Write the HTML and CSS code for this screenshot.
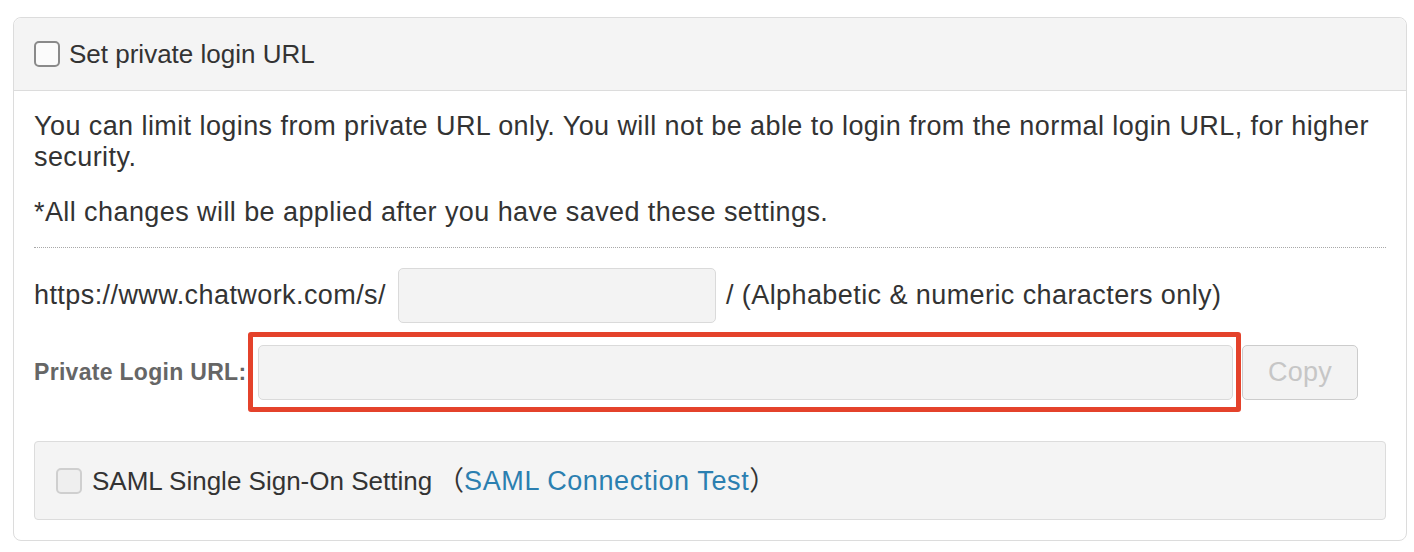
FILE: index.html
```html
<!DOCTYPE html>
<html lang="en">
<head>
<meta charset="utf-8">
<title>Private login URL</title>
<link rel="stylesheet" href="styles.css">
</head>
<body>
<section class="panel">
  <header class="panel-head">
    <label class="check-label">
      <input type="checkbox" class="check">
      <span>Set private login URL</span>
    </label>
  </header>
  <div class="panel-body">
    <p class="desc">You can limit logins from private URL only. You will not be able to login from the normal login URL, for higher security.</p>
    <p class="desc note">*All changes will be applied after you have saved these settings.</p>
    <div class="divider"></div>
    <div class="url-row">
      <span class="url-prefix">https://www.chatwork.com/s/</span>
      <input type="text" class="field slug-field">
      <span class="url-hint">/ (Alphabetic &amp; numeric characters only)</span>
    </div>
    <div class="login-row">
      <span class="login-label">Private Login URL:</span>
      <div class="login-field-wrap">
        <input type="text" class="field login-field">
        <div class="highlight"></div>
      </div>
      <button class="copy-btn" type="button">Copy</button>
    </div>
    <div class="saml-box">
      <label class="saml-label">
        <input type="checkbox" class="check check-disabled">
        <span>SAML Single Sign-On Setting</span>
      </label>
      <span class="saml-link-wrap"><span class="paren">（</span><a href="#" class="saml-link">SAML Connection Test</a><span class="paren">）</span></span>
    </div>
  </div>
</section>
</body>
</html>
```

FILE: styles.css
```css
* {
  box-sizing: border-box;
}

body {
  margin: 0;
  background: #ffffff;
  font-family: "Liberation Sans", Arial, "Noto Sans CJK JP", sans-serif;
  color: #333333;
}

.panel {
  margin: 17px 0 0 13px;
  width: 1394px;
  border: 1px solid #dcdcdc;
  border-radius: 8px;
  background: #ffffff;
}

.panel-head {
  height: 73px;
  padding: 0 20px;
  display: flex;
  align-items: center;
  background: #f4f4f4;
  border-bottom: 1px solid #dcdcdc;
  border-radius: 8px 8px 0 0;
}

.check-label {
  display: flex;
  align-items: center;
  gap: 9px;
  font-size: 26px;
  color: #333333;
}

.check {
  appearance: none;
  -webkit-appearance: none;
  margin: 0;
  width: 26px;
  height: 26px;
  border: 2px solid #8a8a8a;
  border-radius: 5px;
  background: #fbfbfb;
  flex: none;
}

.check-disabled {
  border-color: #cfcfcf;
  background: #efefef;
}

.panel-body {
  padding: 20px 20px 20px 20px;
}

.desc {
  margin: 0;
  font-size: 27px;
  line-height: 31px;
  letter-spacing: 0.42px;
  color: #333333;
}

.note {
  margin-top: 24px;
}

.divider {
  margin-top: 19px;
  border-top: 1px dotted #a8a8a8;
}

.url-row {
  margin-top: 20px;
  display: flex;
  align-items: center;
  font-size: 27px;
  letter-spacing: 0.42px;
  color: #333333;
}

.field {
  height: 55px;
  border: 1px solid #dadada;
  border-radius: 5px;
  background: #f3f3f3;
  font: inherit;
  padding: 0 10px;
  outline: none;
}

.slug-field {
  width: 318px;
  margin: 0 10px 0 12px;
}

.login-row {
  margin-top: 22px;
  display: flex;
  align-items: center;
}

.login-label {
  font-size: 23px;
  font-weight: bold;
  letter-spacing: 0.3px;
  color: #666666;
  width: 224px;
  flex: none;
  white-space: nowrap;
}

.login-field-wrap {
  position: relative;
  width: 975px;
  flex: none;
}

.login-field {
  display: block;
  width: 100%;
}

.highlight {
  position: absolute;
  top: -13px;
  left: -10px;
  right: -8px;
  bottom: -12px;
  border: 5px solid #e4422b;
  border-radius: 3px;
  pointer-events: none;
}

.copy-btn {
  margin-left: 9px;
  width: 116px;
  height: 55px;
  border: 1px solid #cccccc;
  border-radius: 5px;
  background: #f3f3f3;
  color: #c6c6c6;
  font-family: "Liberation Sans", Arial, sans-serif;
  font-size: 27px;
  letter-spacing: 0.3px;
  padding: 0;
}

.saml-box {
  margin-top: 41px;
  height: 79px;
  display: flex;
  align-items: center;
  padding: 0 21px;
  background: #f4f4f4;
  border: 1px solid #dcdcdc;
  border-radius: 4px;
  font-size: 26px;
  line-height: 30px;
}

.saml-label {
  display: flex;
  align-items: center;
  gap: 10px;
  color: #333333;
}

.saml-link-wrap {
  margin-left: 5px;
  color: #333333;
  line-height: 30px;
}

.paren {
  font-family: "Noto Sans CJK JP", sans-serif;
  font-size: 27px;
  line-height: 20px;
}

.saml-link {
  font-size: 27px;
  letter-spacing: 0.6px;
  color: #2b7fb0;
  text-decoration: none;
}
```
